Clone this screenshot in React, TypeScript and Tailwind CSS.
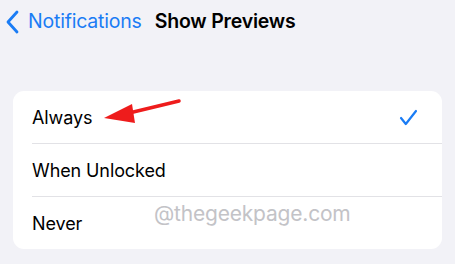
import React from 'react';

const rows = ['Always', 'When Unlocked', 'Never'];

const App: React.FC = () => {
  return (
    <div
      className="w-[455px] h-[264px] bg-[#f2f2f7] relative overflow-hidden"
      style={{ fontFamily: 'Inter, "Liberation Sans", sans-serif' }}
    >
      {/* Nav bar */}
      <div className="flex items-center h-[43px] pl-[5px]">
        <svg width="14" height="24" viewBox="0 0 14 24" className="mr-[9px]">
          <path d="M12 2 L3 12 L12 22" fill="none" stroke="#1a7cf5" strokeWidth="2.8" strokeLinecap="round" strokeLinejoin="round" />
        </svg>
        <span className="text-[19.5px] text-[#1a7cf5] tracking-[-0.2px]">Notifications</span>
        <span className="ml-[13px] text-[19.5px] font-semibold text-black tracking-[-0.2px]">Show Previews</span>
      </div>

      {/* Options card */}
      <div className="mt-[48px] mx-[13px] bg-white rounded-[11px] overflow-hidden">
        {rows.map((label, i) => (
          <div key={label} className="pl-[19px]">
            <div className="flex items-center justify-between h-[52px] pr-[24px]">
              <span className="text-[18px] text-black tracking-[-0.1px]">{label}</span>
              {i === 0 && (
                <svg width="19" height="17" viewBox="0 0 19 17">
                  <path d="M2 9 L6.8 15 L17 2" fill="none" stroke="#1a7cf5" strokeWidth="2.2" strokeLinecap="round" strokeLinejoin="round" />
                </svg>
              )}
            </div>
            {i < rows.length - 1 && <div className="h-px bg-[#e2e2e6]" />}
          </div>
        ))}
      </div>

      {/* Red arrow annotation */}
      <svg className="absolute left-0 top-0 pointer-events-none" width="455" height="264">
        <line x1="179" y1="101" x2="125" y2="114" stroke="#ee1c1c" strokeWidth="3.5" strokeLinecap="round" />
        <polygon points="104,118 132,104 135,123" fill="#ee1c1c" />
      </svg>

      {/* Watermark */}
      <div className="absolute left-[154px] top-[198px] text-[21px] text-[#c3c3c7] tracking-[-0.2px] pointer-events-none">
        @thegeekpage.com
      </div>
    </div>
  );
};

export default App;
